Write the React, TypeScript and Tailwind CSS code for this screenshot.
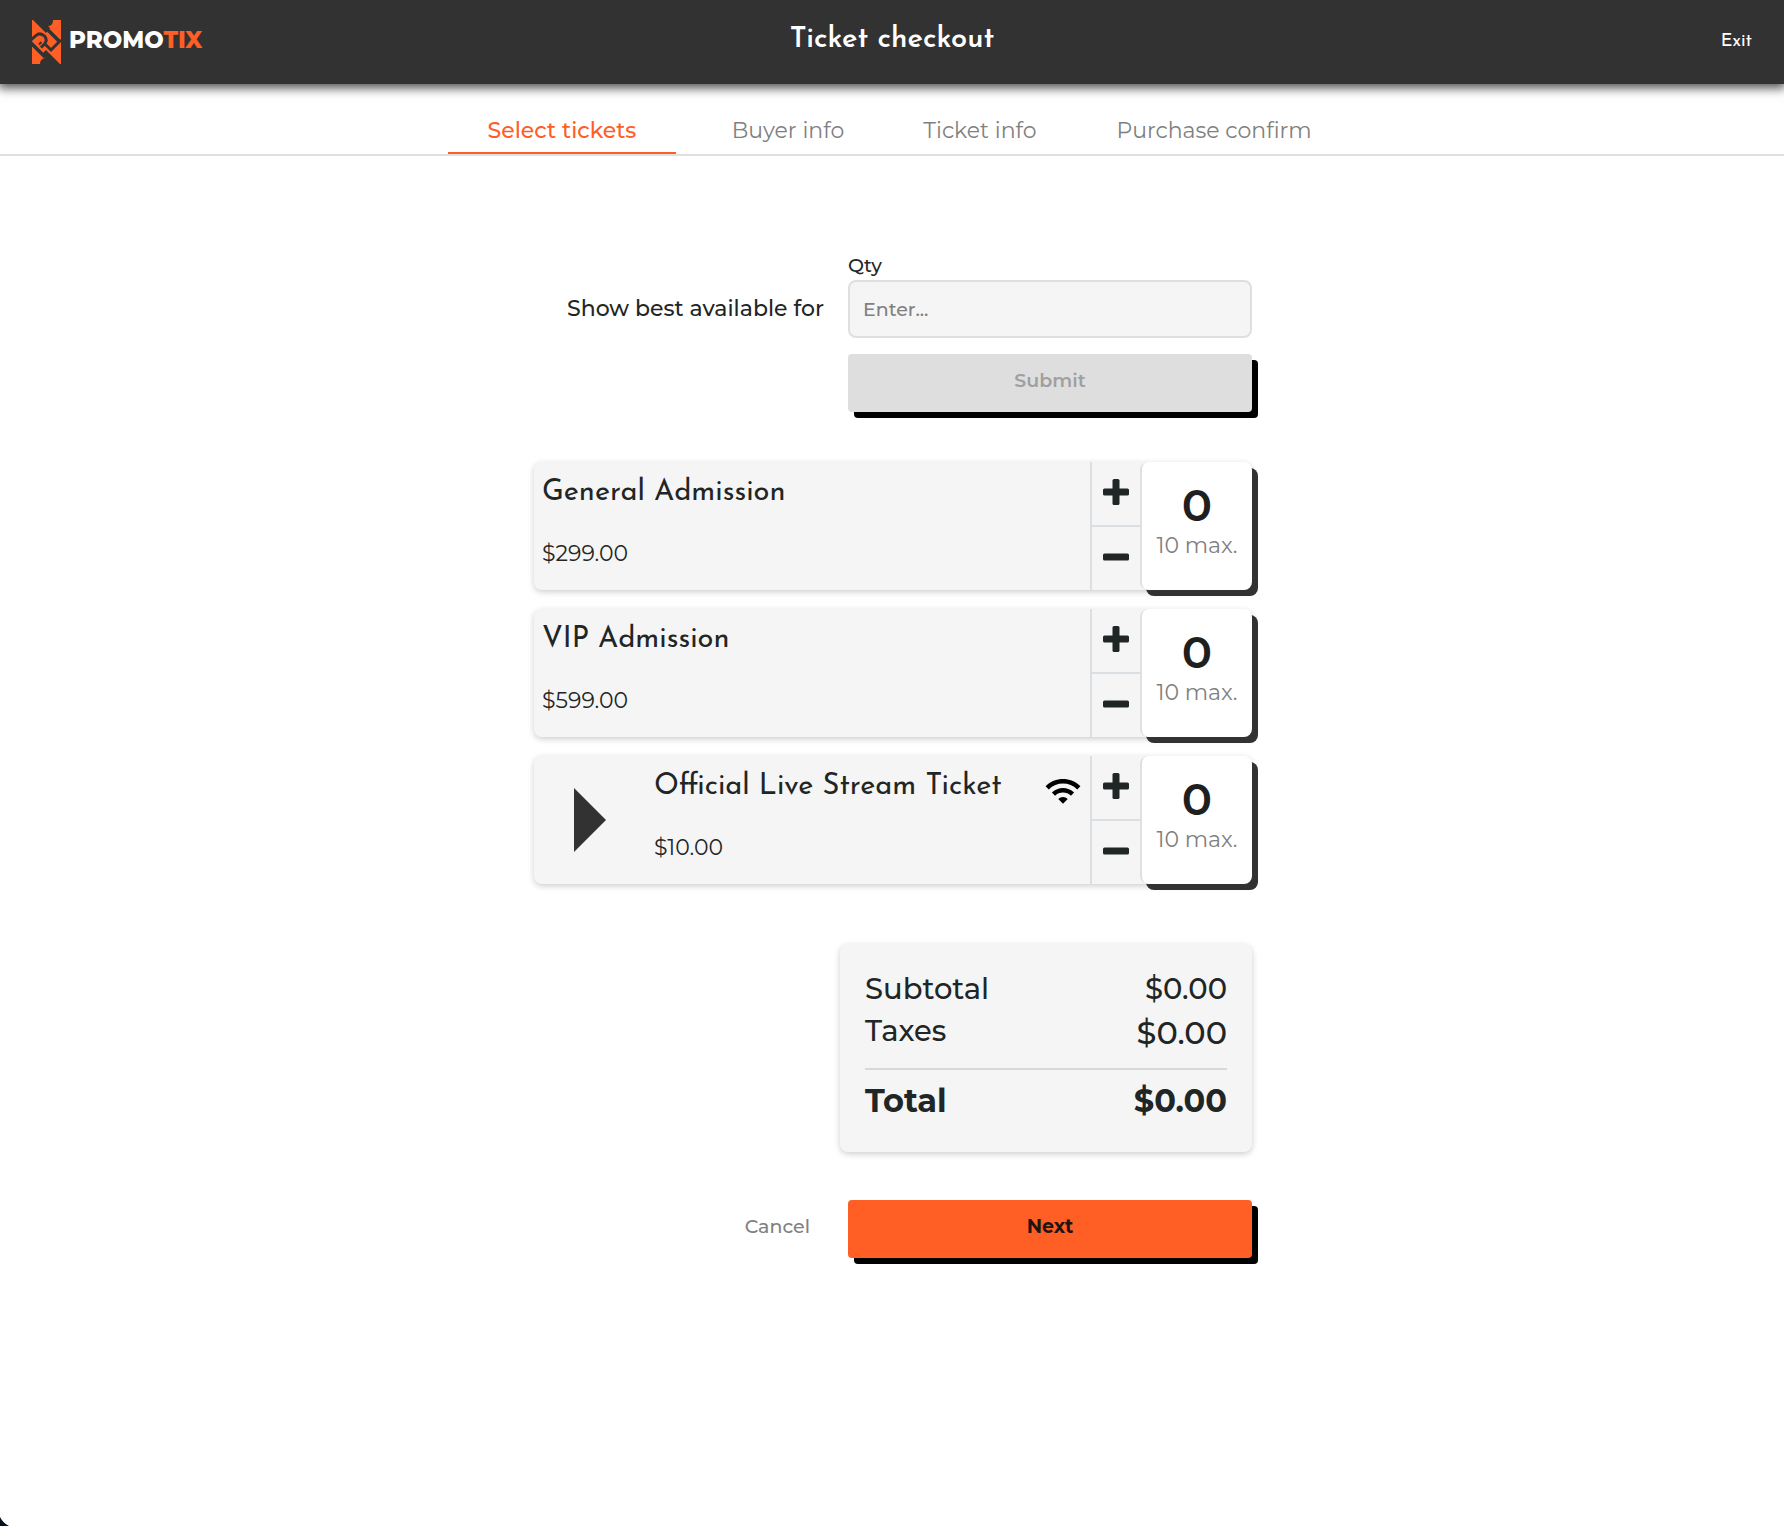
import { useState } from 'react'
import { MdWifi } from 'react-icons/md'

interface Ticket {
  id: string
  name: string
  price: number
  max: number
  isStream?: boolean
}

const TICKETS: Ticket[] = [
  { id: 'general', name: 'General Admission', price: 299, max: 10 },
  { id: 'vip', name: 'VIP Admission', price: 599, max: 10 },
  { id: 'stream', name: 'Official Live Stream Ticket', price: 10, max: 10, isStream: true },
]

const formatPrice = (value: number) => `$${value.toFixed(2)}`

function Logo() {
  return (
    <a href="#home" className="flex items-center gap-2">
      <svg viewBox="0 0 29 44" className="h-11 w-[29px]" aria-hidden="true">
        <path d="M0 0 H29 V44 H0 Z" fill="#ff5e24" />
        <path d="M1 0 H21 Q21 6 16 6 L18 8 L14 13 Z" fill="#323232" />
        <path d="M28 44 H8 Q8 39 13 38 L10 34 L14 30 Z" fill="#323232" />
        <g fill="none" stroke="#323232" strokeWidth="3">
          <path d="M12 6 L28 22" strokeWidth="3.5" />
          <path d="M-1 23 L13 37" strokeWidth="3.5" />
          <path d="M-1 20 L4 15.5 Q8 12 12.5 16 Q16 20 12.5 24 L9 27.5" />
          <path d="M7 24.5 L9.5 22" strokeWidth="2" />
          <path d="M13.5 24.5 L19 30 L29 20" />
        </g>
      </svg>
      <span className="pb-1 text-[23px] font-extrabold text-white">
        PROMO<span className="text-[#ff5e24]">TIX</span>
      </span>
    </a>
  )
}

function Header() {
  return (
    <header className="relative grid h-[84px] grid-cols-3 items-center bg-[#323232] px-8 text-white shadow-[0_2px_10px_2px_rgba(0,0,0,0.7)]">
      <Logo />
      <h1 className="pb-1 text-center font-['Josefin_Sans','Lato',sans-serif] text-[29px] font-semibold">Ticket checkout</h1>
      <a href="#exit" className="justify-self-end font-['Josefin_Sans','Lato',sans-serif] text-lg">
        Exit
      </a>
    </header>
  )
}

function Steps() {
  return (
    <nav className="flex justify-center border-b-2 border-[#e0e0e0] pt-5 pl-4 text-[22px] text-[#808080]">
      <a
        href="#select"
        aria-current="step"
        className="mr-4 flex h-[50px] w-[228px] items-center justify-center border-b-2 border-[#ff5e24] pt-1 font-medium text-[#ff5e24]"
      >
        Select tickets
      </a>
      <a href="#buyer" className="flex h-[50px] w-48 items-center justify-center pt-0.5">Buyer info</a>
      <a href="#ticket" className="flex h-[50px] w-48 items-center justify-center pt-0.5">Ticket info</a>
      <a href="#confirm" className="flex h-[50px] w-[276px] items-center justify-center pt-0.5">Purchase confirm</a>
    </nav>
  )
}

function PlusIcon() {
  return (
    <svg viewBox="0 0 26 26" className="size-[26px]" fill="currentColor" aria-hidden="true">
      <rect x="0" y="9.5" width="26" height="7" rx="1.6" />
      <rect x="9.5" y="0" width="7" height="26" rx="1.6" />
    </svg>
  )
}

function MinusIcon() {
  return (
    <svg viewBox="0 0 26 26" className="size-[26px]" fill="currentColor" aria-hidden="true">
      <rect x="0" y="9.5" width="26" height="7" rx="1.6" />
    </svg>
  )
}

interface TicketRowProps {
  ticket: Ticket
  count: number
  onChange: (count: number) => void
}

function TicketRow({ ticket, count, onChange }: TicketRowProps) {
  return (
    <li className="flex h-32 rounded-lg bg-[#f5f5f5] shadow-[0_2px_6px_rgba(0,0,0,0.2)]">
      {ticket.isStream && (
        <div className="flex w-28 items-center pl-10">
          <svg viewBox="0 0 32 64" className="h-16 w-8" fill="#323232" aria-hidden="true">
            <path d="M0 0 L32 32 L0 64 Z" />
          </svg>
        </div>
      )}
      <div className="flex flex-1 flex-col gap-7 px-2 pt-3">
        <div className="flex h-9 items-start justify-between">
          <h2 className="font-['Josefin_Sans','Lato',sans-serif] text-[29px] leading-[38px]">{ticket.name}</h2>
          {ticket.isStream && <MdWifi className="mt-1 size-[38px] text-black" aria-label="Live stream" />}
        </div>
        <p className="text-[22px] leading-8">{formatPrice(ticket.price)}</p>
      </div>
      <div className="flex w-[50px] flex-col border-l-2 border-[#dadfe3]">
        <button
          type="button"
          aria-label={`Add ${ticket.name}`}
          onClick={() => onChange(Math.min(count + 1, ticket.max))}
          className="flex flex-1 items-center justify-center border-b-2 border-[#dadfe3] pb-1"
        >
          <PlusIcon />
        </button>
        <button
          type="button"
          aria-label={`Remove ${ticket.name}`}
          onClick={() => onChange(Math.max(count - 1, 0))}
          className="flex flex-1 items-center justify-center pb-1"
        >
          <MinusIcon />
        </button>
      </div>
      <div className="flex w-28 flex-col items-center rounded-lg border-l-2 border-[#e0e0e0] bg-white pt-[18px] shadow-[6px_6px_0_#323232]">
        <span className="text-[45px] leading-[50px] font-semibold text-[#1f1f1f]">{count}</span>
        <span className="text-[22px] leading-8 text-[#808080]">{ticket.max} max.</span>
      </div>
    </li>
  )
}

export default function App() {
  const [qty, setQty] = useState('')
  const [counts, setCounts] = useState<Record<string, number>>({})

  const subtotal = TICKETS.reduce((sum, t) => sum + t.price * (counts[t.id] ?? 0), 0)
  const taxes = 0

  return (
    <div className="relative min-h-screen bg-white font-['Montserrat','Inter',sans-serif] text-[#1f2625]">
      <Header />
      <Steps />

      <main className="mx-auto max-w-[720px] pt-24">
        <form
          className="grid grid-cols-[1fr_404px] gap-x-6"
          onSubmit={(e) => e.preventDefault()}
        >
          <label htmlFor="qty" className="col-start-2 text-[19px] leading-7 font-medium">
            Qty
          </label>
          <p className="flex items-center justify-end pb-0.5 text-[22px] font-medium">Show best available for</p>
          <input
            id="qty"
            value={qty}
            onChange={(e) => setQty(e.target.value)}
            placeholder="Enter..."
            className="h-[58px] rounded-lg border-2 border-[#dfdfdf] bg-[#f5f5f5] px-[13px] text-[19px] font-medium outline-none placeholder:text-[#808080]"
          />
          <button
            type="submit"
            disabled={!qty}
            className="col-start-2 mt-4 h-[58px] rounded bg-[#dedede] pb-1 text-[19px] font-semibold text-[#a0a0a0] shadow-[6px_6px_0_#000]"
          >
            Submit
          </button>
        </form>

        <ul className="mt-[50px] flex flex-col gap-[19px] pl-0.5">
          {TICKETS.map((t) => (
            <TicketRow
              key={t.id}
              ticket={t}
              count={counts[t.id] ?? 0}
              onChange={(count) => setCounts({ ...counts, [t.id]: count })}
            />
          ))}
        </ul>

        <dl className="mt-[60px] ml-auto grid h-52 w-[412px] grid-cols-2 content-start items-center rounded-lg bg-[#f5f5f5] px-[25px] pt-6 text-[29px] leading-[42px] font-medium shadow-[0_2px_6px_rgba(0,0,0,0.2)]">
          <dt>Subtotal</dt>
          <dd className="text-right">{formatPrice(subtotal)}</dd>
          <dt>Taxes</dt>
          <dd className="pt-1 text-right text-[32px] leading-[38px]">{formatPrice(taxes)}</dd>
          <div className="col-span-2 mt-4 mb-2 h-[2px] bg-[#d8d8d8]" />
          <dt className="text-[32px] leading-[46px] font-bold">Total</dt>
          <dd className="text-right text-[32px] leading-[46px] font-bold">{formatPrice(subtotal + taxes)}</dd>
        </dl>

        <div className="mt-12 flex justify-end gap-[38px] text-[19px]">
          <button type="button" className="pb-1 font-medium text-[#808080]">
            Cancel
          </button>
          <button
            type="button"
            className="h-[58px] w-[404px] rounded bg-[#ff5e24] pb-1 font-bold text-[#1f1410] shadow-[6px_6px_0_#000]"
          >
            Next
          </button>
        </div>
      </main>

      {/* rounded window corner */}
      <svg viewBox="0 0 9 9" className="absolute bottom-0 left-0 size-[9px]" fill="#061018" aria-hidden="true">
        <path d="M0 0 Q3 6 9 9 H0 Z" />
      </svg>
    </div>
  )
}
